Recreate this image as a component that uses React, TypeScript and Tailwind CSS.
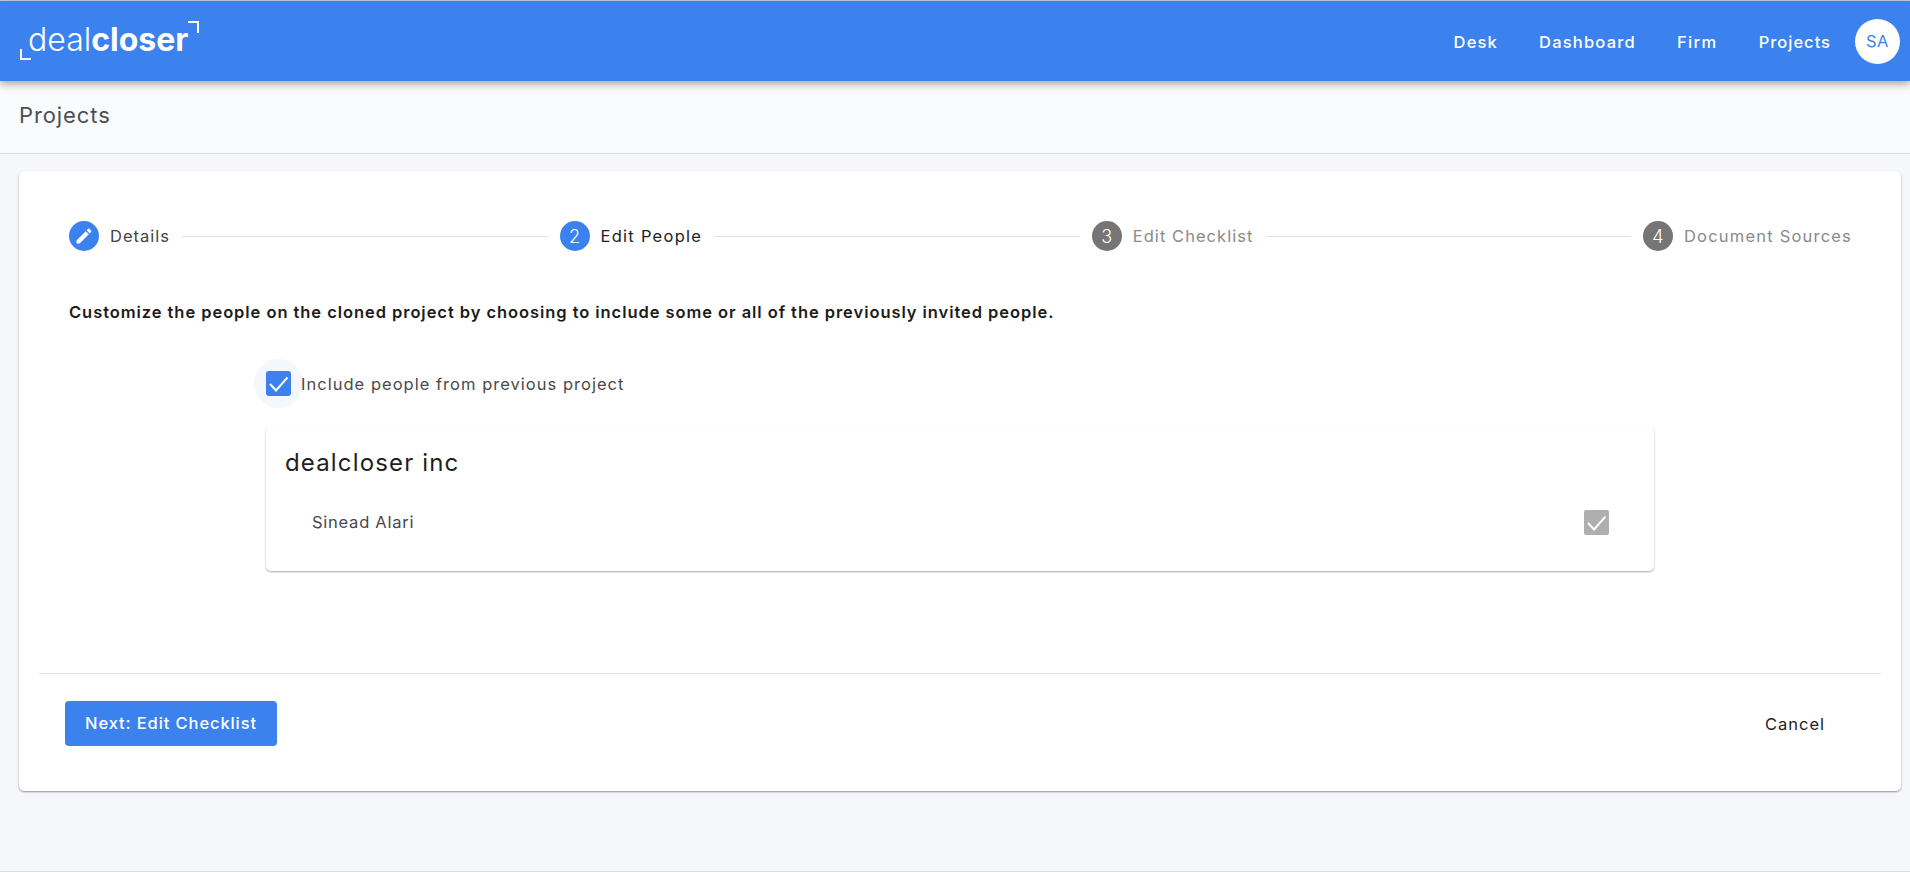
const navItems = [
  { label: 'Desk', tracking: 'tracking-[1.2px]' },
  { label: 'Dashboard', tracking: 'tracking-[1.2px]' },
  { label: 'Firm', tracking: 'tracking-[1.4px]' },
  { label: 'Projects', tracking: 'tracking-[1px]' },
];

function Logo() {
  return (
    <div className="relative h-[40px] w-[180px] text-white">
      <span className="absolute left-[9px] top-[-1px] text-[32px] font-light leading-[40px]">
        deal<span className="font-bold">closer</span>
      </span>
      <svg className="absolute left-0 top-0" width="180" height="40" viewBox="0 0 180 40" fill="none" stroke="currentColor" strokeWidth="2">
        <path d="M2 28v10h10" />
        <path d="M169 1h10v11" />
      </svg>
    </div>
  );
}

function EditIcon() {
  return (
    <svg width="20" height="20" viewBox="0 0 24 24" fill="currentColor">
      <path d="M3 17.25V21h3.75L17.81 9.94l-3.75-3.75L3 17.25zM20.71 7.04c.39-.39.39-1.02 0-1.41l-2.34-2.34c-.39-.39-1.02-.39-1.41 0l-1.83 1.83 3.75 3.75 1.83-1.83z" />
    </svg>
  );
}

function CheckMark() {
  return (
    <svg width="25" height="25" viewBox="0 0 25 25" fill="none" stroke="currentColor" strokeWidth="2">
      <path d="M4 13l6 6.5L21.5 6.5" />
    </svg>
  );
}

function Step({ icon, label, state, tracking }: { icon: React.ReactNode; label: string; state: 'done' | 'active' | 'todo'; tracking: string }) {
  const circle = state === 'todo' ? 'bg-[#757575]' : 'bg-[#3b82ee]';
  const text = state === 'todo' ? 'text-[#8a8a8a]' : state === 'active' ? 'text-[#222222]' : 'text-[#444444]';
  return (
    <div className="flex items-center">
      <div className={`flex h-[30px] w-[30px] shrink-0 items-center justify-center rounded-full text-[18px] font-light text-white ${circle}`}>
        {icon}
      </div>
      <span className={`ml-[11px] whitespace-nowrap text-[16.5px] ${tracking} ${text}`}>{label}</span>
    </div>
  );
}

function StepLine() {
  return <div className="mx-[12px] h-px flex-1 bg-[#e0e0e0]" />;
}

export default function App() {
  return (
    <div className="flex h-[872px] flex-col border-b border-[#dcdee3] bg-[#f5f7fb] font-['Inter','Open_Sans',sans-serif]">
      <div className="h-px bg-[#c9cfd9]" />
      <header className="relative z-10 flex h-[80px] items-center justify-between bg-[#3b82ee] pl-[19px] pr-[10px] shadow-[0_3px_8px_rgba(0,0,0,0.35)]">
        <Logo />
        <nav className="flex items-center text-white">
          <div className="mr-[24px] flex gap-[41px] pt-[2px]">
            {navItems.map((item) => (
              <a key={item.label} className={`text-[16.5px] font-medium ${item.tracking}`}>
                {item.label}
              </a>
            ))}
          </div>
          <div className="flex h-[45px] w-[45px] items-center justify-center rounded-full bg-white text-[16.5px] tracking-[0.6px] text-[#3b82ee]">SA</div>
        </nav>
      </header>

      <div className="flex h-[73px] items-center border-b border-[#d3dae3] bg-[#fafbfd] pb-[4px] pl-[19px] text-[22px] tracking-[0.9px] text-[#4a4f57]">
        Projects
      </div>

      <main className="ml-[19px] mr-[9px] mt-[17px] flex h-[620px] flex-col rounded-[5px] bg-white shadow-[0_1px_2px_rgba(0,0,0,0.4)]">
        <div className="flex h-[130px] items-center pl-[50px] pr-[49px]">
          <Step icon={<EditIcon />} label="Details" state="done" tracking="tracking-[1px]" />
          <StepLine />
          <Step icon="2" label="Edit People" state="active" tracking="tracking-[1.27px]" />
          <StepLine />
          <Step icon="3" label="Edit Checklist" state="todo" tracking="tracking-[1.05px]" />
          <StepLine />
          <Step icon="4" label="Document Sources" state="todo" tracking="tracking-[1.2px]" />
        </div>

        <p className="pl-[50px] text-[16.5px] font-semibold leading-[22px] tracking-[0.94px] text-[#1c1c1c]">
          Customize the people on the cloned project by choosing to include some or all of the previously invited people.
        </p>

        <div className="ml-[247px] mt-[48px] flex h-[25px] items-center">
          <div className="relative h-[25px] w-[25px]">
            <div className="absolute left-[-12px] top-[-12px] h-[49px] w-[49px] rounded-full bg-[#f4f8fe]" />
            <div className="relative flex h-[25px] w-[25px] items-center justify-center rounded-[3px] bg-[#3b82ee] text-white">
              <CheckMark />
            </div>
          </div>
          <span className="relative ml-[10px] pt-[1px] text-[16.5px] tracking-[1.02px] text-[#4a4a4a]">Include people from previous project</span>
        </div>

        <section className="ml-[247px] mt-[30px] h-[145px] w-[1388px] rounded-[5px] bg-white px-[19px] pt-[19px] shadow-[0_1px_2px_rgba(0,0,0,0.35)]">
          <h2 className="text-[24px] leading-[36px] tracking-[1.15px] text-[#1f1f1f]">dealcloser inc</h2>
          <div className="mt-[29px] flex items-center justify-between pl-[27px] pr-[26px]">
            <span className="text-[16.5px] tracking-[0.75px] text-[#4a4550]">Sinead Alari</span>
            <div className="flex h-[25px] w-[25px] items-center justify-center rounded-[2px] bg-[#afafaf] text-white">
              <CheckMark />
            </div>
          </div>
        </section>

        <div className="mx-[20px] mt-[102px] border-t border-[#dfe1e7]" />

        <div className="flex items-center justify-between pl-[46px] pr-[76px] pt-[27px]">
          <button className="flex h-[45px] w-[212px] items-center justify-center rounded-[4px] bg-[#3b82ee] text-[16.5px] font-medium tracking-[0.9px] text-white">
            Next: Edit Checklist
          </button>
          <button className="pt-[2px] text-[16.5px] tracking-[1px] text-[#222222]">Cancel</button>
        </div>
      </main>
    </div>
  );
}
